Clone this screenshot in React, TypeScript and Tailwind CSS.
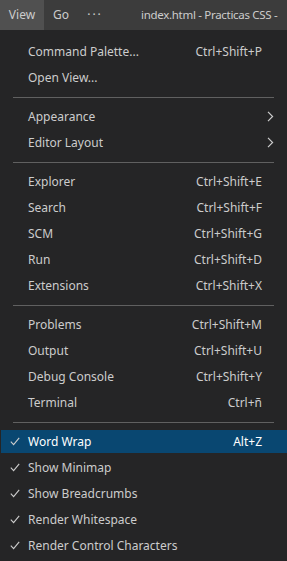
import { Fragment } from "react";

type Item = {
  label: string;
  shortcut?: string;
  submenu?: boolean;
  checked?: boolean;
  active?: boolean;
};

const groups: Item[][] = [
  [
    { label: "Command Palette...", shortcut: "Ctrl+Shift+P" },
    { label: "Open View..." },
  ],
  [
    { label: "Appearance", submenu: true },
    { label: "Editor Layout", submenu: true },
  ],
  [
    { label: "Explorer", shortcut: "Ctrl+Shift+E" },
    { label: "Search", shortcut: "Ctrl+Shift+F" },
    { label: "SCM", shortcut: "Ctrl+Shift+G" },
    { label: "Run", shortcut: "Ctrl+Shift+D" },
    { label: "Extensions", shortcut: "Ctrl+Shift+X" },
  ],
  [
    { label: "Problems", shortcut: "Ctrl+Shift+M" },
    { label: "Output", shortcut: "Ctrl+Shift+U" },
    { label: "Debug Console", shortcut: "Ctrl+Shift+Y" },
    { label: "Terminal", shortcut: "Ctrl+ñ" },
  ],
  [
    { label: "Word Wrap", shortcut: "Alt+Z", checked: true, active: true },
    { label: "Show Minimap", checked: true },
    { label: "Show Breadcrumbs", checked: true },
    { label: "Render Whitespace", checked: true },
    { label: "Render Control Characters", checked: true },
  ],
];

function Check() {
  return (
    <svg width="10" height="9" viewBox="0 0 10 9" fill="none">
      <path d="M0.8 4.6 L3.6 7.6 L9.2 0.8" stroke="#cccccc" strokeWidth="1.1" />
    </svg>
  );
}

function Chevron() {
  return (
    <svg width="7" height="11" viewBox="0 0 7 11" fill="none">
      <path d="M1 0.8 L5.6 5.5 L1 10.2" stroke="#cccccc" strokeWidth="1.2" />
    </svg>
  );
}

function MenuRow({ item }: { item: Item }) {
  return (
    <div className="h-[26px] pt-[1px] pl-[1px]">
      <div
        className={`flex h-[23px] items-center ${
          item.active ? "bg-[#094771] text-white" : "text-[#cccccc]"
        }`}
      >
        <div className="flex w-[27px] shrink-0 items-center justify-center pl-[1px]">
          {item.checked && <Check />}
        </div>
        <span className="flex-1 whitespace-nowrap">{item.label}</span>
        {item.shortcut && (
          <span className="mr-[25px] whitespace-nowrap">{item.shortcut}</span>
        )}
        {item.submenu && (
          <span className="mr-[13px] flex items-center">
            <Chevron />
          </span>
        )}
      </div>
    </div>
  );
}

export default function App() {
  return (
    <div className="h-[561px] w-[287px] overflow-hidden bg-[#252526] font-['Noto_Sans','Open_Sans',sans-serif] text-[12px]">
      <div className="flex h-[30px] items-center bg-[#3c3c3c] text-[#cccccc]">
        <div className="flex h-full w-[44px] shrink-0 items-center justify-center bg-[#505050]">
          View
        </div>
        <div className="flex h-full w-[34px] shrink-0 items-center justify-center">
          Go
        </div>
        <div className="flex h-full w-[34px] shrink-0 items-center justify-center tracking-[2px]">
          ···
        </div>
        <div className="ml-[29px] shrink-0 whitespace-nowrap text-[11.5px] tracking-[-0.3px]">
          index.html - Practicas CSS -
        </div>
      </div>
      <div className="pt-[9px]">
        {groups.map((group, gi) => (
          <Fragment key={gi}>
            {gi > 0 && (
              <div className="flex h-[13px] items-center px-[13px]">
                <div className="h-px w-full bg-[#606060]" />
              </div>
            )}
            {group.map((item) => (
              <MenuRow key={item.label} item={item} />
            ))}
          </Fragment>
        ))}
      </div>
    </div>
  );
}
